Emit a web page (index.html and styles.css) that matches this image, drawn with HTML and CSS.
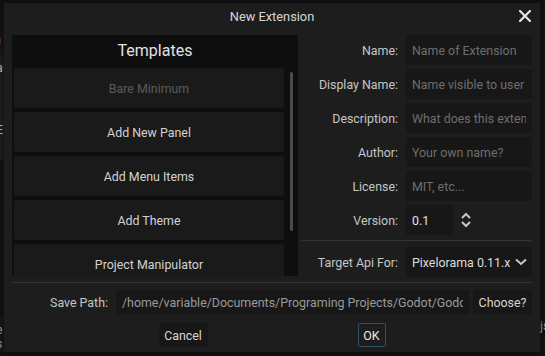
FILE: index.html
```html
<!DOCTYPE html>
<html lang="en">
<head>
  <meta charset="UTF-8" />
  <title>New Extension</title>
  <link rel="stylesheet" href="styles.css">
</head>
<body>

<div class="behind top"><span>n</span></div>
<div class="behind mid">
  <span>a</span>
  <span>l</span>
  <span class="gap">E</span>
</div>
<div class="behind low">
  <span>e</span>
  <span>s</span>
</div>
<div class="behind-right">
  <span>js</span>
</div>

<div class="dialog">
  <div class="titlebar">
    <span>New Extension</span>
    <svg class="close" width="12" height="12" viewBox="0 0 12 12">
      <path d="M1 1 L11 11 M11 1 L1 11" stroke="#e6e6e6" stroke-width="2.2" stroke-linecap="square" />
    </svg>
  </div>

  <div class="body">
    <section class="templates">
      <h2>Templates</h2>
      <div class="tpl-list">
        <div class="tpl-items">
          <button class="tpl disabled">Bare Minimum</button>
          <button class="tpl">Add New Panel</button>
          <button class="tpl">Add Menu Items</button>
          <button class="tpl">Add Theme</button>
          <button class="tpl">Project Manipulator</button>
        </div>
        <div class="scroll"><div class="thumb"></div></div>
      </div>
    </section>

    <div class="fields">
      <label>Name:</label>
      <input type="text" placeholder="Name of Extension">
      <label>Display Name:</label>
      <input type="text" placeholder="Name visible to user">
      <label>Description:</label>
      <input type="text" placeholder="What does this extension do?">
      <label>Author:</label>
      <input type="text" placeholder="Your own name?">
      <label>License:</label>
      <input type="text" placeholder="MIT, etc...">
      <label>Version:</label>
      <div class="spin">
        <input type="text" value="0.1">
        <svg width="12" height="16" viewBox="0 0 12 16">
          <path d="M2 6 L6 2 L10 6 M2 10 L6 14 L10 10" fill="none" stroke="#c8c8c8" stroke-width="2" />
        </svg>
      </div>
      <hr class="sep sub">
      <label>Target Api For:</label>
      <div class="select">
        <span>Pixelorama 0.11.x</span>
        <svg width="12" height="8" viewBox="0 0 12 8">
          <path d="M1 1.5 L6 6 L11 1.5" fill="none" stroke="#c8c8c8" stroke-width="2" />
        </svg>
      </div>
    </div>
  </div>

  <hr class="sep">

  <div class="path-row">
    <label>Save Path:</label>
    <input type="text" class="path" readonly value="/home/variable/Documents/Programing Projects/Godot/Godot Projects/Pixelorama Extensions">
    <button class="btn">Choose?</button>
  </div>

  <div class="actions">
    <button class="btn">Cancel</button>
    <button class="btn ok">OK</button>
  </div>
</div>

</body>
</html>
```

FILE: styles.css
```css
html, body {
  margin: 0;
  height: 100%;
  background: #121212;
  font-family: Roboto, 'Noto Sans', sans-serif;
  font-size: 12.4px;
  color: #d0d0d0;
  overflow: hidden;
}
button, input {
  font-family: inherit;
  font-size: 12.4px;
}

/* app behind the dialog */
.behind {
  position: absolute;
  left: 0;
  width: 4px;
  overflow: hidden;
  color: #bbb;
  line-height: 15px;
}
.behind span {
  display: block;
  margin-left: -4px;
}
.behind.top { top: 32px; height: 22px; background: #161616; }
.behind.top span { margin-left: -6px; }
.behind.mid { top: 55px; height: 105px; background: #1f1f1f; padding-top: 5px; box-sizing: border-box; }
.behind.mid .gap { margin-top: 32px; }
.behind.low { top: 318px; height: 34px; background: #181818; color: #999; line-height: 14px; padding-top: 5px; box-sizing: border-box; }
.behind-right {
  position: absolute;
  left: 540px;
  top: 318px;
  color: #999;
}

.dialog {
  position: absolute;
  left: 4px;
  top: 3px;
  width: 536px;
  height: 349px;
  background: #1d1d1d;
  display: flex;
  flex-direction: column;
  box-shadow: 0 0 6px rgba(0,0,0,0.5);
}
.dialog > * { flex: none; }
.titlebar {
  height: 26px;
  display: flex;
  align-items: center;
  justify-content: center;
  position: relative;
  color: #d6d6d6;
  font-size: 12.8px;
  margin-bottom: 6px;
}
.titlebar .close {
  position: absolute;
  right: 9px;
  top: 7px;
}

.body {
  display: flex;
  gap: 3px;
  padding: 0 7px 0 8px;
}
.templates {
  width: 286px;
  height: 241px;
  background: #0e0e0e;
  display: flex;
  flex-direction: column;
}
.templates h2 {
  margin: 0;
  height: 33px;
  line-height: 31px;
  text-align: center;
  font-size: 16px;
  font-weight: normal;
  color: #e2e2e2;
}
.tpl-list {
  flex: 1;
  display: flex;
  overflow: hidden;
  padding-left: 2px;
}
.tpl-items {
  width: 270px;
  display: flex;
  flex-direction: column;
  gap: 4px;
}
.tpl {
  flex: 0 0 40px;
  background: #1a1a1a;
  border: none;
  border-radius: 2px;
  color: #d2d2d2;
  padding: 0;
}
.tpl.disabled { color: #5a5a5a; }
.scroll {
  width: 14px;
  display: flex;
  justify-content: center;
}
.thumb {
  width: 3px;
  height: 159px;
  margin-top: 4px;
  margin-left: 1px;
  background: #4b4b4b;
  border-radius: 2px;
}

.fields {
  width: 232px;
  display: grid;
  grid-template-columns: 97px 126px;
  grid-template-rows: repeat(6, 30px) 4px 30px;
  column-gap: 8px;
  row-gap: 4px;
  align-items: center;
}
.fields label {
  text-align: right;
  color: #c6c6c6;
  white-space: nowrap;
}
input {
  height: 30px;
  box-sizing: border-box;
  background: #171717;
  border: none;
  border-radius: 2px;
  padding: 0 6px;
  color: #e0e0e0;
  outline: none;
  width: 100%;
}
input::placeholder { color: #6e6e6e; }
.spin {
  display: flex;
  align-items: center;
  gap: 6px;
}
.spin input { width: 48px; }
.select {
  height: 30px;
  background: #171717;
  border-radius: 2px;
  display: flex;
  align-items: center;
  justify-content: space-between;
  padding: 0 5px 0 6px;
  color: #dcdcdc;
  white-space: nowrap;
}
.sep {
  border: none;
  border-top: 1px solid #333;
  margin: 5px 7px 7px 7px;
  height: 0;
}
.fields .sep.sub {
  grid-column: 1 / 3;
  margin: 1px 0 0 0;
  align-self: start;
}

.path-row {
  display: flex;
  align-items: center;
  gap: 8px;
  padding: 0 8px;
  height: 24px;
}
.path-row label {
  width: 96px;
  text-align: right;
  color: #c6c6c6;
}
.path-row .path {
  width: 353px;
  height: 24px;
  color: #9a9a9a;
  flex: none;
}
.path-row .btn {
  margin-left: -4px;
  width: 59px;
}
.btn {
  height: 24px;
  background: #171717;
  border: 1px solid transparent;
  border-radius: 2px;
  color: #d6d6d6;
  padding: 0 4px;
}
.actions {
  display: flex;
  justify-content: center;
  gap: 150px;
  margin-top: 9px;
}
.actions .btn { width: 49px; }
.actions .ok {
  width: 28px;
  padding: 0;
  background: #1d1d1d;
  border-color: #2f4f62;
  color: #e8e8e8;
}
```
